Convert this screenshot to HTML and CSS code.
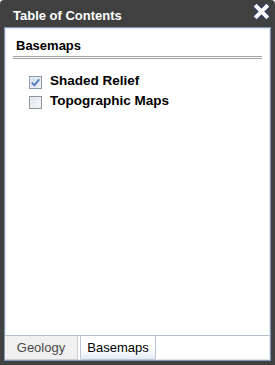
FILE: index.html
```html
<!DOCTYPE html>
<html>
<head>
<meta charset="utf-8">
<link rel="stylesheet" href="styles.css">
</head>
<body>
<div class="window">
  <div class="titlebar">
    <span class="title">Table of Contents</span>
    <svg class="close" width="15" height="15" viewBox="0 0 15 15">
      <path d="M2.6 2.6 L12.4 12.4 M12.4 2.6 L2.6 12.4" stroke="#2b3d70" stroke-width="6" stroke-linecap="square" fill="none"/>
      <path d="M2.6 2.6 L12.4 12.4 M12.4 2.6 L2.6 12.4" stroke="#ffffff" stroke-width="4" stroke-linecap="square" fill="none"/>
    </svg>
  </div>
  <div class="panel">
    <div class="content">
      <div class="section-title">Basemaps</div>
      <div class="layers">
        <div class="row">
          <span class="check checked">
            <svg width="11" height="11" viewBox="0 0 11 11"><path d="M1.8 5.6 L4.4 8.2 L9.2 2.4" stroke="#5a80bb" stroke-width="2" fill="none"/></svg>
          </span>
          <span class="label">Shaded Relief</span>
        </div>
        <div class="row">
          <span class="check"></span>
          <span class="label">Topographic Maps</span>
        </div>
      </div>
    </div>
    <div class="tabs">
      <div class="tab">Geology</div>
      <div class="tab active">Basemaps</div>
    </div>
  </div>
</div>
</body>
</html>
```

FILE: styles.css
```css
html {
  margin: 0;
  background: #ffffff;
}
body {
  margin: 0;
  width: 275px;
  height: 365px;
  font-family: "Liberation Sans", Arial, sans-serif;
}
.window {
  box-sizing: border-box;
  width: 275px;
  height: 365px;
  background: #404040;
  border-radius: 4px 4px 0 0;
  padding: 0 4px 4px 4px;
  display: flex;
  flex-direction: column;
}
.titlebar {
  height: 27px;
  flex: none;
  display: flex;
  align-items: flex-start;
  justify-content: space-between;
  padding-left: 9px;
}
.title {
  color: #ffffff;
  font-weight: bold;
  font-size: 13px;
  line-height: 15px;
  padding-top: 8px;
}
.close {
  margin-top: 4px;
  margin-right: 2px;
}
.panel {
  flex: 1;
  background: #ffffff;
  border: 1px solid #7f98b8;
  box-shadow: inset 0 0 0 1px #dfe6ee;
  display: flex;
  flex-direction: column;
}
.content {
  flex: 1;
  padding: 0 8px;
}
.section-title {
  margin-top: 10px;
  padding: 0 0 3px 3px;
  font-weight: bold;
  font-size: 13px;
  line-height: 15px;
  color: #000000;
  border-bottom: 3px double #a3a3a3;
}
.layers {
  margin-top: 13px;
  padding-left: 16px;
}
.row {
  height: 20px;
  display: flex;
  align-items: center;
  gap: 8px;
}
.check {
  box-sizing: border-box;
  width: 13px;
  height: 13px;
  border: 1px solid #8e9299;
  background: linear-gradient(135deg, #dde3ea, #f6f8fa);
  box-shadow: inset 0 0 0 1px #eef1f4;
  display: flex;
  align-items: center;
  justify-content: center;
}
.check.checked {
  border-color: #8a97a8;
  background: linear-gradient(135deg, #cfdceb, #eef3f8);
}
.label {
  font-weight: bold;
  font-size: 13.5px;
  line-height: 15px;
  color: #000000;
  padding-bottom: 3px;
}
.tabs {
  flex: none;
  height: 24px;
  border-top: 1px solid #b4bfcd;
  display: flex;
  gap: 2px;
}
.tab {
  box-sizing: border-box;
  font-size: 13px;
  line-height: 15px;
  display: flex;
  align-items: center;
  justify-content: center;
}
.tab:first-child {
  width: 73px;
  background: #f0f0f0;
  color: #4a4a4a;
  border-right: 1px solid #c9ced6;
  border-bottom: 1px solid #c9ced6;
}
.tab.active {
  width: 76px;
  background: linear-gradient(#ffffff 55%, #e3ebf5);
  color: #000000;
  border: 1px solid #bcc8d8;
  border-top: none;
  border-radius: 0 0 2px 2px;
}
```
